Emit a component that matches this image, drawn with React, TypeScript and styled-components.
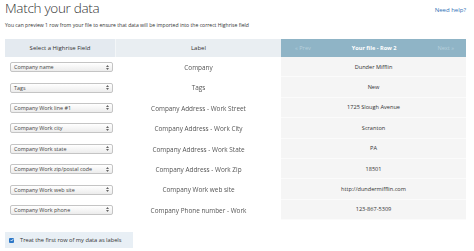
import { styled, createGlobalStyle } from "styled-components";
import { Fragment } from "react";

const GlobalStyle = createGlobalStyle`
  body {
    margin: 0;
    background: #ffffff;
    font-family: "Open Sans", "Liberation Sans", sans-serif;
    color: #333333;
  }
`;

const Page = styled.div`
  width: 474px;
  height: 251px;
  padding: 0 8px 0 5px;
  box-sizing: border-box;
  overflow: hidden;
`;

const TopBar = styled.div`
  display: flex;
  justify-content: space-between;
  align-items: flex-start;
`;

const Title = styled.h1`
  margin: 0;
  font-size: 13.5px;
  font-weight: 300;
  letter-spacing: -0.3px;
  line-height: 17px;
  color: #333;
`;

const HelpLink = styled.a`
  font-size: 6px;
  line-height: 8px;
  color: #2f6fb5;
  text-decoration: none;
  margin-top: 6px;
`;

const Intro = styled.p`
  margin: 4px 0 0;
  font-size: 5.1px;
  line-height: 8px;
`;

const Table = styled.div`
  margin-top: 10px;
  display: grid;
  grid-template-columns: 111px 165px 185px;
  grid-template-rows: 18px;
  grid-auto-rows: 20.4px;
  font-size: 5.6px;
`;

const HeadCell = styled.div<{ $tone?: "a" | "b" }>`
  display: flex;
  align-items: center;
  justify-content: center;
  background: ${(p) => (p.$tone === "b" ? "#e9eef2" : "#e4eaf0")};
  border-right: ${(p) => (p.$tone === "a" ? "1px solid #f3f6f8" : "none")};
  font-size: 6px;
  color: #333;
`;

const FileHead = styled.div`
  display: flex;
  align-items: center;
  justify-content: space-between;
  padding: 0 12px 0 14px;
  background: #8fb4c6;
  color: #b7d0dc;
`;

const FileTitle = styled.span`
  color: #ffffff;
  font-weight: 700;
`;

const FieldCell = styled.div`
  display: flex;
  align-items: center;
  padding: 0 3px 0 5px;
  background: #fff;
`;

const SelectBox = styled.div`
  flex: 1;
  height: 8px;
  display: flex;
  align-items: center;
  justify-content: space-between;
  padding: 0 3px;
  border: 1px solid #c4c4c4;
  border-radius: 2px;
  background: linear-gradient(#ffffff, #ececec);
  font-size: 5.4px;
  color: #444;
`;

const LabelCell = styled.div`
  display: flex;
  align-items: center;
  justify-content: center;
  background: #fff;
  font-size: 6.4px;
  color: #555;
  will-change: transform;
`;

const ValueCell = styled.div`
  display: flex;
  align-items: center;
  justify-content: center;
  background: #f5f5f5;
  border-bottom: 1px solid #fbfbfb;
  color: #333;
`;

const LabelsToggle = styled.label`
  margin-top: 12px;
  width: 128px;
  height: 16px;
  display: flex;
  align-items: center;
  gap: 6px;
  padding-left: 4px;
  box-sizing: border-box;
  background: #e8eff5;
  font-size: 5.7px;
  color: #333;
`;

const Check = styled.span`
  width: 5px;
  height: 5px;
  border-radius: 1px;
  background: #2e78c7;
  display: flex;
  align-items: center;
  justify-content: center;
`;

const rows = [
  { field: "Company name", label: "Company", value: "Dunder Mifflin" },
  { field: "Tags", label: "Tags", value: "New" },
  { field: "Company Work line #1", label: "Company Address - Work Street", value: "1725 Slough Avenue" },
  { field: "Company Work city", label: "Company Address - Work City", value: "Scranton" },
  { field: "Company Work state", label: "Company Address - Work State", value: "PA" },
  { field: "Company Work zip/postal code", label: "Company Address - Work Zip", value: "18501" },
  { field: "Company Work web site", label: "Company Work web site", value: "http://dundermifflin.com" },
  { field: "Company Work phone", label: "Company Phone number - Work", value: "123-867-5309" },
];

function Arrows() {
  return (
    <svg width="3" height="5" viewBox="0 0 3 5">
      <path d="M0 2 L1.5 0 L3 2 Z M0 3 L1.5 5 L3 3 Z" fill="#666" />
    </svg>
  );
}

export default function App() {
  return (
    <Page>
      <GlobalStyle />
      <TopBar>
        <Title>Match your data</Title>
        <HelpLink href="#">Need help?</HelpLink>
      </TopBar>
      <Intro>
        You can preview 1 row from your file to ensure that data will be imported into the correct Highrise field
      </Intro>
      <Table>
        <HeadCell $tone="a">Select a Highrise Field</HeadCell>
        <HeadCell $tone="b">Label</HeadCell>
        <FileHead>
          <span>« Prev</span>
          <FileTitle>Your file - Row 2</FileTitle>
          <span>Next »</span>
        </FileHead>
        {rows.map((r) => (
          <Fragment key={r.field}>
            <FieldCell>
              <SelectBox>
                <span>{r.field}</span>
                <Arrows />
              </SelectBox>
            </FieldCell>
            <LabelCell>{r.label}</LabelCell>
            <ValueCell>{r.value}</ValueCell>
          </Fragment>
        ))}
      </Table>
      <LabelsToggle>
        <Check>
          <svg width="4" height="4" viewBox="0 0 4 4">
            <path d="M0.6 2 L1.6 3 L3.4 0.9" stroke="#fff" strokeWidth="0.8" fill="none" />
          </svg>
        </Check>
        Treat the first row of my data as labels
      </LabelsToggle>
    </Page>
  );
}
